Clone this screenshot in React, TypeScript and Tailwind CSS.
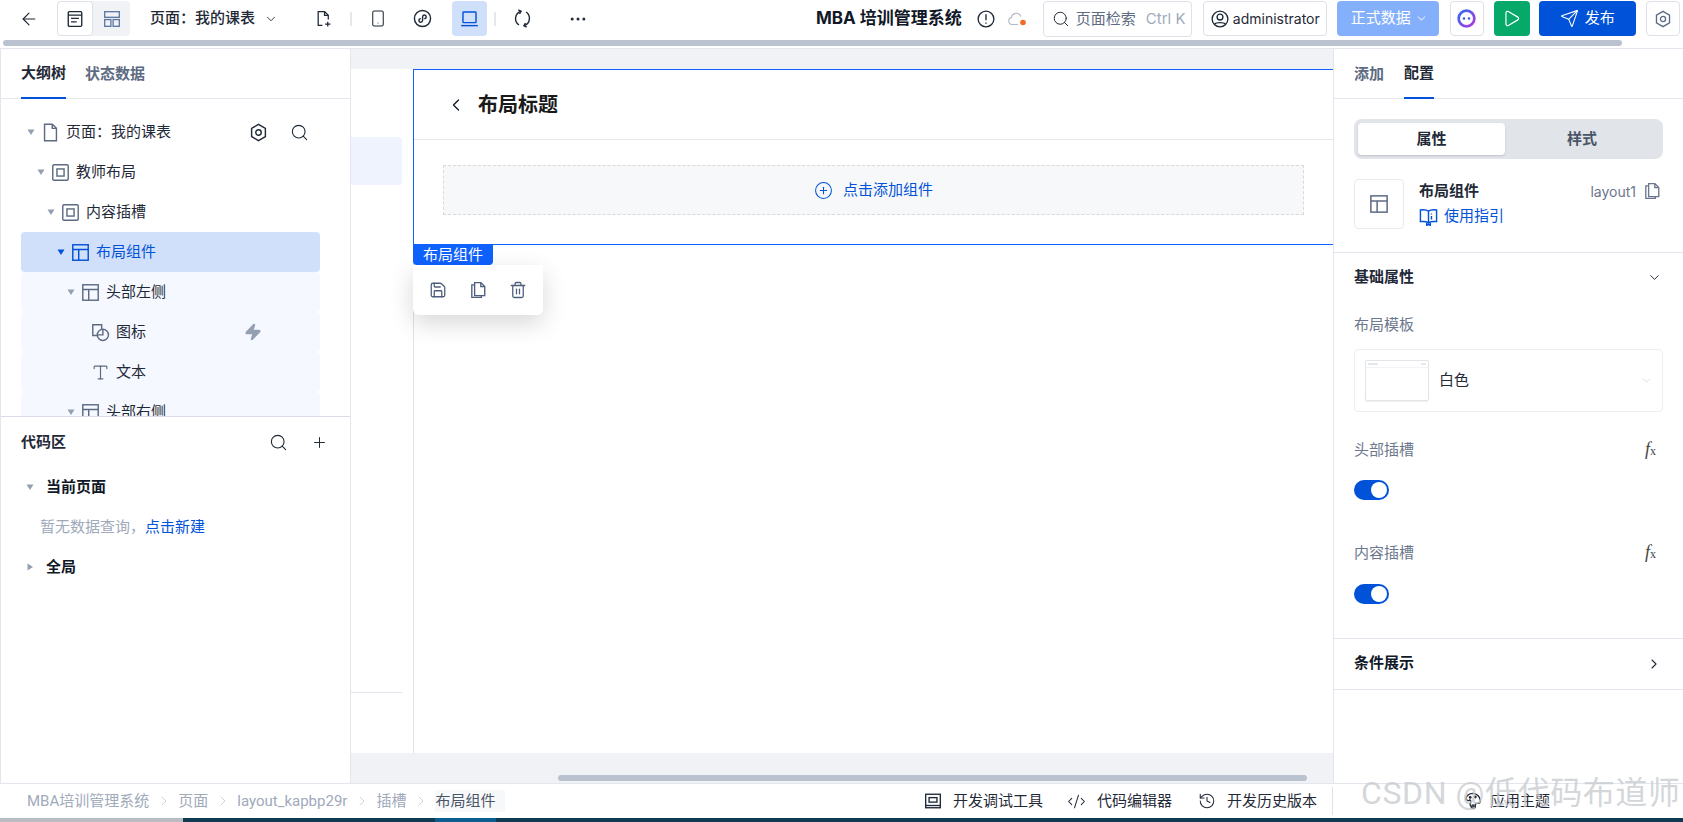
import type { ReactNode } from 'react';
import {
  ArrowLeft, ChevronDown, ChevronLeft, ChevronRight, CirclePlus, CodeXml, Ellipsis, History, Play,
  Plus, Save, Search, Send, Smartphone, Trash2, Type, Zap,
} from 'lucide-react';

function Svg({ className, children }: { className?: string; children: ReactNode }) {
  return (
    <svg viewBox="0 0 16 16" fill="none" stroke="currentColor" strokeWidth="1.2" className={className}>
      {children}
    </svg>
  );
}

const PageListIcon = ({ className }: { className?: string }) => (
  <Svg className={className}><rect x="2" y="1.5" width="12" height="13" rx="1" /><path d="M2 4.5h12M4.5 7.5h7M4.5 10.5h5" /></Svg>
);
const LayoutGridIcon = ({ className }: { className?: string }) => (
  <Svg className={className}><rect x="1.5" y="1.5" width="13" height="5" /><rect x="1.5" y="8.5" width="5.5" height="6" /><rect x="9" y="8.5" width="5.5" height="6" /></Svg>
);
const SlotIcon = ({ className }: { className?: string }) => (
  <Svg className={className}><rect x="1.5" y="1.5" width="13" height="13" rx="1" /><rect x="5" y="5" width="6" height="6" /></Svg>
);
const LayoutIcon = ({ className }: { className?: string }) => (
  <Svg className={className}><rect x="1.5" y="1.5" width="13" height="13" /><path d="M1.5 5.5h13M6.5 5.5v9" /></Svg>
);
const FileIcon = ({ className }: { className?: string }) => (
  <Svg className={className}><path d="M3 1h6.5L13 4.5V15H3z" /><path d="M9.5 1v3.5H13" /></Svg>
);
const FileAddIcon = ({ className }: { className?: string }) => (
  <Svg className={className}><path d="M7 14.5H3V1.5h6L12.5 5v4" /><path d="M9 1.5V5h3.5M12 11v4.5M9.5 13.2h5" /></Svg>
);
const CopyIcon = ({ className }: { className?: string }) => (
  <Svg className={className}><path d="M5 1.5h5.5L14 5v8H5z" /><path d="M10.5 1.5V5H14M5 3.5H2.5v11H11V13" /></Svg>
);
const HexIcon = ({ className }: { className?: string }) => (
  <Svg className={className}><path d="M8 1.2l5.8 3.3v7L8 14.8 2.2 11.5v-7z" /><circle cx="8" cy="8" r="2.3" /></Svg>
);
const ShapeIcon = ({ className }: { className?: string }) => (
  <Svg className={className}><path d="M6 10.5H1.5v-9h7.5v4" /><circle cx="10" cy="10" r="4.7" /><path d="M5.5 10h4.5V5.5" /></Svg>
);
const MiniIcon = ({ className }: { className?: string }) => (
  <Svg className={className}><circle cx="8" cy="8" r="6.8" /><path d="M5 9.6c0 2 2.9 2 3.1-.1V6.5c.2-2 3-1.9 3 0 0 1-.8 1.6-1.7 1.6M6.6 8.1c-.9 0-1.6.7-1.6 1.5" /></Svg>
);
const LaptopIcon = ({ className }: { className?: string }) => (
  <Svg className={className}><rect x="2.5" y="2.5" width="11" height="9" rx=".6" /><path d="M1 14h14" /></Svg>
);
const SyncIcon = ({ className }: { className?: string }) => (
  <Svg className={className}><path d="M6.5 2A6.5 6.5 0 0 0 5 13.5M9.5 14A6.5 6.5 0 0 0 11 2.5" /><path d="M4.5 .8L6.8 2 5.5 4.2M11.5 15.2L9.2 14l1.3-2.2" /></Svg>
);
const AlertIcon = ({ className }: { className?: string }) => (
  <Svg className={className}><circle cx="8" cy="8" r="7" /><path d="M8 3.8v5.4M8 11v1.2" /></Svg>
);
const UserIcon = ({ className }: { className?: string }) => (
  <Svg className={className}><circle cx="8" cy="8" r="7" /><circle cx="8" cy="6.3" r="2.6" /><path d="M3.2 12.6c1.2-1.8 8.4-1.8 9.6 0" /></Svg>
);
const BookIcon = ({ className }: { className?: string }) => (
  <Svg className={className}><path d="M8 3.5C6.5 2.4 3.5 2.2 1.2 2.5v9.8c2.5-.3 5.2 0 6.8 1 1.6-1 4.3-1.3 6.8-1V2.5C12.5 2.2 9.5 2.4 8 3.5zM8 3.5v9.8" /><path d="M10.5 5.5v.8M10.5 7.5v3M6.5 13.5v2l1.5-1 1.5 1v-2" /></Svg>
);
const DebugIcon = ({ className }: { className?: string }) => (
  <Svg className={className}><rect x="1.5" y="2" width="13" height="12" /><path d="M1.5 12h13" /><rect x="4.5" y="5" width="7" height="4" /></Svg>
);
const ThemeIcon = ({ className }: { className?: string }) => (
  <Svg className={className}><path d="M8 1.2a6.8 6.8 0 0 0-6.5 5c1 1.5 3 2 3.8.8.8 1 1.5 2 0 3.5.5 2 1.6 4.3 3 4.3s2-1.5 1.7-3c-.2-1.3 1-2 2.4-1.8 1.2.2 2.2-.4 2.1-2.5A6.9 6.9 0 0 0 8 1.2z" /><circle cx="5.5" cy="4.8" r=".7" /><circle cx="10" cy="4.5" r=".7" /><circle cx="8" cy="12.5" r="1" /></Svg>
);

function Triangle({ open = true, className = '' }: { open?: boolean; className?: string }) {
  return (
    <svg viewBox="0 0 8 8" fill="currentColor" className={`h-[8px] w-[8px] shrink-0 ${className}`}>
      {open ? <path d="M0.5 1.5h7L4 7z" /> : <path d="M1.5 0.5v7L7 4z" />}
    </svg>
  );
}

const treeRows = [
  { label: '页面：我的课表', pad: 'pl-[6px]', Icon: FileIcon, arrow: true, tint: '' },
  { label: '教师布局', pad: 'pl-[16px]', Icon: SlotIcon, arrow: true, tint: '' },
  { label: '内容插槽', pad: 'pl-[26px]', Icon: SlotIcon, arrow: true, tint: '' },
  { label: '布局组件', pad: 'pl-[36px]', Icon: LayoutIcon, arrow: true, tint: 'selected' },
  { label: '头部左侧', pad: 'pl-[46px]', Icon: LayoutIcon, arrow: true, tint: 'child' },
  { label: '图标', pad: 'pl-[56px]', Icon: ShapeIcon, arrow: false, tint: 'child', zap: true },
  { label: '文本', pad: 'pl-[56px]', Icon: Type, arrow: false, tint: 'child' },
  { label: '头部右侧', pad: 'pl-[46px]', Icon: LayoutIcon, arrow: true, tint: 'child' },
];

function TreeRow({ row }: { row: (typeof treeRows)[number] }) {
  const Icon = row.Icon;
  const selected = row.tint === 'selected';
  const bg = selected ? 'bg-[#d0e0fb] rounded-[4px]' : row.tint === 'child' ? 'bg-[#f5f8ff] rounded-[4px]' : '';
  return (
    <div className={`flex h-[40px] w-[299px] shrink-0 items-center ${row.pad} ${bg}`}>
      <span className="w-[8px] shrink-0">{row.arrow && <Triangle className={selected ? 'text-[#0052d9]' : 'text-[#94a0b2]'} />}</span>
      <Icon className={`ml-[6px] h-[19px] w-[19px] shrink-0 ${selected ? 'text-[#0052d9]' : 'text-[#5d6b82]'}`} strokeWidth={row.label === '文本' ? 1.5 : undefined} />
      <span className={`ml-[6px] whitespace-nowrap text-[15px] ${selected ? 'text-[#0052d9]' : 'text-[#1f2937]'}`}>{row.label}</span>
      {row.label === '页面：我的课表' && (
        <span className="ml-auto mr-[11px] flex items-center gap-[22px] text-[#1f2937]">
          <HexIcon className="h-[19px] w-[19px]" />
          <Search className="h-[19px] w-[19px]" strokeWidth={1.4} />
        </span>
      )}
      {row.zap && <Zap className="ml-[98px] h-[18px] w-[18px] fill-[#94a0b2] text-[#94a0b2]" />}
    </div>
  );
}

function Crumb({ text, last }: { text: string; last?: boolean }) {
  return (
    <>
      <span className={`font-['Roboto','Noto_Sans_CJK_SC',sans-serif] ${last ? 'bg-[#f7f8fa] pr-[10px] text-[#4a5568]' : 'text-[#a0aabb]'}`}>{text}</span>
      {!last && <ChevronRight className="mx-[6.5px] h-[16px] w-[16px] text-[#b5bdc9]" strokeWidth={1} />}
    </>
  );
}

function Toggle() {
  return (
    <div className="flex h-[20px] w-[35px] items-center justify-end rounded-full bg-[#0052d9] pr-[2px]">
      <span className="h-[16px] w-[16px] rounded-full bg-white" />
    </div>
  );
}

function FieldLabel({ text }: { text: string }) {
  return (
    <div className="flex items-center justify-between pr-[7px] text-[15px] text-[#6b778c]">
      {text}
      <span className="font-['Liberation_Serif',serif] text-[18px] font-normal italic leading-[20px] text-[#444]">f<span className="not-italic text-[12px]">x</span></span>
    </div>
  );
}

export default function App() {
  return (
    <div className="relative flex h-[822px] w-[1683px] flex-col overflow-hidden bg-white font-['Inter','Noto_Sans_CJK_SC',sans-serif] text-[15px] text-[#1f2937]">
      {/* top bar */}
      <header className="flex h-[38px] shrink-0 items-start pt-px [&>*]:shrink-0">
        <div className="flex h-[35px] w-[57px] items-center pl-[19px]"><ArrowLeft className="h-[20px] w-[20px]" strokeWidth={1.4} /></div>
        <div className="flex h-[35px] w-[73px] rounded-[4px] bg-[#f0f2f5]">
          <div className="flex w-[36px] items-center justify-center rounded-[4px] border border-[#dde1e8] bg-white"><PageListIcon className="h-[18px] w-[18px]" /></div>
          <div className="flex w-[37px] items-center justify-center"><LayoutGridIcon className="h-[18px] w-[18px] text-[#5d7aa6]" /></div>
        </div>
        <div className="ml-[20px] flex h-[35px] items-center whitespace-nowrap font-medium">页面：我的课表<ChevronDown className="ml-[9px] h-[14px] w-[14px]" strokeWidth={1.5} /></div>
        <div className="ml-[37px] flex h-[35px] items-center"><FileAddIcon className="h-[19px] w-[17px]" /></div>
        <span className="ml-[18px] mt-[11px] h-[14px] w-[2px] bg-[#e4e7ec]" />
        <div className="ml-[17px] flex h-[35px] items-center"><Smartphone className="h-[21px] w-[18px]" strokeWidth={1.4} /></div>
        <div className="ml-[26px] flex h-[35px] items-center"><MiniIcon className="h-[19px] w-[19px]" /></div>
        <div className="ml-[20px] flex h-[35px] w-[35px] items-center justify-center rounded-[4px] bg-[#d0e0fb]"><LaptopIcon className="h-[19px] w-[19px] text-[#0052d9]" /></div>
        <span className="ml-[7px] mt-[11px] h-[14px] w-[2px] bg-[#e4e7ec]" />
        <div className="ml-[17px] flex h-[35px] items-center"><SyncIcon className="h-[19px] w-[19px]" /></div>
        <div className="ml-[36px] flex h-[35px] items-center"><Ellipsis className="h-[20px] w-[20px]" strokeWidth={1.6} /></div>
        <div className="ml-[228px] flex h-[35px] items-center whitespace-nowrap text-[17px] font-bold text-[#111827]">MBA 培训管理系统</div>
        <div className="ml-[15px] flex h-[35px] items-center"><AlertIcon className="h-[18px] w-[18px]" /></div>
        <div className="ml-[12px] flex h-[35px] items-center">
          <svg viewBox="0 0 20 16" fill="none" stroke="#b3bac5" strokeWidth="1.1" className="h-[16px] w-[20px]"><path d="M5 13.5a3.5 3.5 0 0 1-.6-6.9A5 5 0 0 1 14 5.5M5 13.5h6" /><circle cx="16" cy="11.5" r="2.8" fill="#f26b26" stroke="none" /></svg>
        </div>
        <div className="ml-[16px] flex h-[36px] w-[149px] items-center rounded-[4px] border border-[#dde1e8] pl-[8px]">
          <Search className="h-[18px] w-[18px]" strokeWidth={1.3} />
          <span className="ml-[6px] whitespace-nowrap text-[#5d6b82]">页面检索</span>
          <span className="ml-[10px] whitespace-nowrap text-[#a0aabb]">Ctrl K</span>
        </div>
        <div className="ml-[11px] flex h-[35px] w-[124px] items-center rounded-[4px] border border-[#dde1e8] pl-[7px]">
          <UserIcon className="h-[18px] w-[18px]" />
          <span className="ml-[4px] text-[14px]">administrator</span>
        </div>
        <div className="ml-[10px] flex h-[35px] w-[102px] items-center rounded-[4px] bg-[#84b0fb] pl-[14px] text-white">正式数据<ChevronDown className="ml-[4px] h-[13px] w-[13px] text-[#d5e4fd]" /></div>
        <div className="ml-[11px] flex h-[35px] w-[34px] items-center justify-center rounded-[4px] border border-[#dde1e8]">
          <svg viewBox="0 0 20 20" className="h-[21px] w-[21px]">
            <defs><linearGradient id="ring" x1="0" y1="0" x2="1" y2="1"><stop offset="0" stopColor="#2e6bf0" /><stop offset="1" stopColor="#b338e0" /></linearGradient></defs>
            <circle cx="10" cy="10" r="7.5" fill="none" stroke="url(#ring)" strokeWidth="2.6" />
            <circle cx="7.6" cy="10" r="1.2" fill="#3e5bd8" /><circle cx="12.4" cy="10" r="1.2" fill="#3e5bd8" />
          </svg>
        </div>
        <div className="ml-[10px] flex h-[35px] w-[36px] items-center justify-center rounded-[4px] bg-[#07a96b]"><Play className="h-[19px] w-[19px] text-white" strokeWidth={1.5} /></div>
        <div className="ml-[9px] flex h-[35px] w-[97px] items-center justify-center gap-[6px] rounded-[4px] bg-[#0052d9] text-white"><Send className="h-[19px] w-[19px]" strokeWidth={1.4} />发布</div>
        <div className="ml-[10px] flex h-[35px] w-[34px] items-center justify-center rounded-[4px] border border-[#dde1e8] text-[#5d6b82]"><HexIcon className="h-[18px] w-[18px]" /></div>
      </header>

      {/* horizontal scrollbar */}
      <div className="h-[11px] shrink-0 border-b border-[#e3e6ec] pl-[3px] pt-[2px]">
        <div className="h-[6px] w-[1619px] rounded-full bg-[#b9c2ce]" />
      </div>

      <div className="flex h-[734px] shrink-0">
        {/* left panel */}
        <aside className="flex w-[351px] shrink-0 flex-col border-x border-[#e3e6ec]">
          <div className="flex h-[50px] shrink-0 gap-[19px] border-b border-[#e3e6ec] pl-[20px] font-bold">
            <div className="flex h-[50px] items-center border-b-[2px] border-[#0052d9] text-[#1f2937]">大纲树</div>
            <div className="flex h-[50px] items-center text-[#5d6b82]">状态数据</div>
          </div>
          <div className="h-[318px] shrink-0 overflow-hidden border-b border-[#d9dde5] pl-[20px] pt-[13px]">
            {treeRows.map((row) => <TreeRow key={row.label} row={row} />)}
          </div>
          <div className="flex h-[50px] shrink-0 items-center justify-between pl-[20px] pr-[22px]">
            <span className="font-bold">代码区</span>
            <span className="flex items-center gap-[23px]"><Search className="h-[19px] w-[19px]" strokeWidth={1.4} /><Plus className="h-[17px] w-[17px]" strokeWidth={1.4} /></span>
          </div>
          <div className="flex h-[40px] items-center pl-[25px] font-bold text-[#111827]"><Triangle className="text-[#94a0b2]" /><span className="ml-[12px]">当前页面</span></div>
          <div className="flex h-[40px] items-center pl-[39px] text-[#a0aabb]">暂无数据查询，<span className="text-[#0052d9]">点击新建</span></div>
          <div className="flex h-[40px] items-center pl-[25px] font-bold text-[#111827]"><Triangle open={false} className="text-[#94a0b2]" /><span className="ml-[12px]">全局</span></div>
        </aside>

        {/* canvas */}
        <main className="flex w-[982px] shrink-0 flex-col bg-[#f0f2f5]">
          <div className="h-[20px] shrink-0" />
          <div className="flex h-[684px] shrink-0 bg-white">
            <div className="w-[62px] shrink-0">
              <div className="mt-[68px] h-[48px] w-[51px] rounded-r-[4px] bg-[#eef3fd]" />
              <div className="mt-[507px] h-px w-[51px] bg-[#e3e6ec]" />
            </div>
            <div className="flex-1 border-l border-[#dfe2e8]">
              <div className="relative -ml-px h-[176px] border-y border-l border-[#0f62fe]">
                <div className="flex h-[70px] items-center border-b border-[#e8e8e8] pl-[32px]">
                  <ChevronLeft className="h-[20px] w-[20px] text-[#111827]" strokeWidth={1.6} />
                  <span className="ml-[12px] text-[20px] font-bold text-[#1a1a1a]">布局标题</span>
                </div>
                <div className="ml-[29px] mr-[29px] mt-[25px] flex h-[50px] items-center justify-center gap-[10px] border border-dashed border-[#d9d9d9] bg-[#f7f8fa] text-[#0052d9]">
                  <CirclePlus className="h-[19px] w-[19px]" strokeWidth={1.3} />点击添加组件
                </div>
                <div className="absolute left-[-1px] top-[174px] flex h-[21px] w-[80px] items-center justify-center rounded-b-[4px] bg-[#0f62fe] pt-px text-white">布局组件</div>
                <div className="absolute left-[-1px] top-[195px] flex h-[50px] w-[130px] items-center justify-center gap-[22px] rounded-b-[6px] bg-white text-[#4d5f7d] shadow-[0_8px_24px_rgba(0,0,0,0.16)]">
                  <Save className="h-[18px] w-[18px]" strokeWidth={1.7} />
                  <CopyIcon className="h-[18px] w-[18px]" />
                  <Trash2 className="h-[18px] w-[18px]" strokeWidth={1.7} />
                </div>
              </div>
            </div>
          </div>
          <div className="h-[30px] shrink-0 pl-[207px] pt-[22px]">
            <div className="h-[6px] w-[749px] rounded-full bg-[#b9c2ce]" />
          </div>
        </main>

        {/* right panel */}
        <aside className="flex w-[350px] shrink-0 flex-col border-l border-[#e3e6ec]">
          <div className="flex h-[50px] shrink-0 gap-[20px] border-b border-[#e3e6ec] pl-[20px] font-bold">
            <div className="flex h-[50px] items-center text-[#5d6b82]">添加</div>
            <div className="flex h-[50px] items-center border-b-[2px] border-[#0052d9]">配置</div>
          </div>
          <div className="mx-[20px] mt-[20px] flex h-[40px] w-[309px] shrink-0 rounded-[8px] bg-[#e1e4e9] p-[4px] font-bold">
            <div className="flex w-[147px] items-center justify-center rounded-[4px] bg-white shadow-[0_1px_2px_rgba(0,0,0,0.15)]">属性</div>
            <div className="flex flex-1 items-center justify-center text-[#4a5568]">样式</div>
          </div>
          <div className="mx-[20px] mt-[20px] flex h-[51px] shrink-0">
            <div className="flex h-[50px] w-[50px] items-center justify-center rounded-[4px] border border-[#e8eaee]"><LayoutIcon className="h-[20px] w-[20px] text-[#5d6b82]" /></div>
            <div className="ml-[15px] flex-1">
              <div className="flex h-[24px] items-center justify-between">
                <span className="font-bold">布局组件</span>
                <span className="flex items-center gap-[7px] text-[14px] text-[#6b778c]">layout1<CopyIcon className="mr-[2px] h-[18px] w-[18px]" /></span>
              </div>
              <div className="mt-[1px] flex h-[24px] items-center gap-[6px] text-[#0052d9]"><BookIcon className="h-[19px] w-[19px]" />使用指引</div>
            </div>
          </div>
          <div className="mt-[22px] flex h-[50px] shrink-0 items-center justify-between border-t border-[#e3e6ec] pl-[20px] pr-[21px] font-bold">
            基础属性<ChevronDown className="h-[15px] w-[15px] text-[#1f2937]" strokeWidth={1.6} />
          </div>
          <div className="shrink-0 px-[20px]">
            <div className="mt-[12px] text-[#6b778c]">布局模板</div>
            <div className="mt-[12px] flex h-[63px] items-center rounded-[4px] border border-[#eceef2] pl-[10px] pr-[9px]">
              <div className="h-[41px] w-[64px] rounded-[2px] border border-[#e1e4e9] shadow-[0_1px_1px_rgba(0,0,0,0.06)]">
                <div className="flex h-[7px] justify-between border-b border-[#f2f3f5] px-[2px] pt-[2px]"><span className="h-[2px] w-[10px] bg-[#e4e7ec]" /><span className="h-[2px] w-[5px] bg-[#e4e7ec]" /></div>
              </div>
              <span className="ml-[10px] text-[#1f2937]">白色</span>
              <ChevronDown className="ml-auto h-[13px] w-[13px] text-[#c4cad3]" strokeWidth={1.2} />
            </div>
            <div className="mt-[27px]"><FieldLabel text="头部插槽" /></div>
            <div className="mt-[19px]"><Toggle /></div>
            <div className="mt-[42px]"><FieldLabel text="内容插槽" /></div>
            <div className="mt-[19px]"><Toggle /></div>
          </div>
          <div className="mt-[34px] flex h-[52px] shrink-0 items-center justify-between border-y border-[#e3e6ec] pl-[20px] pr-[21px] font-bold text-[#111827]">
            条件展示<ChevronRight className="h-[16px] w-[16px] text-[#1f2937]" strokeWidth={1.6} />
          </div>
        </aside>
      </div>

      {/* status bar */}
      <footer className="flex h-[35px] shrink-0 items-center border-t border-[#e3e6ec] pl-[27px]">
        <Crumb text="MBA培训管理系统" />
        <Crumb text="页面" />
        <Crumb text="layout_kapbp29r" />
        <Crumb text="插槽" />
        <Crumb text="布局组件" last />
        <div className="ml-auto flex items-center text-[#1f2937]">
          <DebugIcon className="h-[18px] w-[18px]" />
          <span className="ml-[11px]">开发调试工具</span>
          <CodeXml className="ml-[24px] h-[19px] w-[19px]" strokeWidth={1.3} />
          <span className="ml-[11px]">代码编辑器</span>
          <History className="ml-[26px] h-[18px] w-[18px]" strokeWidth={1.4} />
          <span className="ml-[11px]">开发历史版本</span>
          <span className="ml-[15px] h-[28px] w-px bg-[#dfe2e8]" />
          <ThemeIcon className="ml-[131px] h-[18px] w-[18px]" />
          <span className="ml-[8px] mr-[133px]">应用主题</span>
        </div>
      </footer>

      {/* bit of desktop under the window */}
      <div className="flex h-[4px] shrink-0 bg-[#0f3a52]">
        <div className="h-full w-[183px] bg-[#b9bdc2]" />
        <div className="ml-[252px] h-full w-[61px] bg-[#0b5c8f]" />
      </div>

      {/* watermark */}
      <div className="absolute left-[1361px] top-[774px] whitespace-nowrap font-['Roboto','Noto_Sans_CJK_SC',sans-serif] text-[32px] leading-[38px] tracking-[0.6px] text-[#c8ccd0]/80">CSDN @低代码布道师</div>
    </div>
  );
}
